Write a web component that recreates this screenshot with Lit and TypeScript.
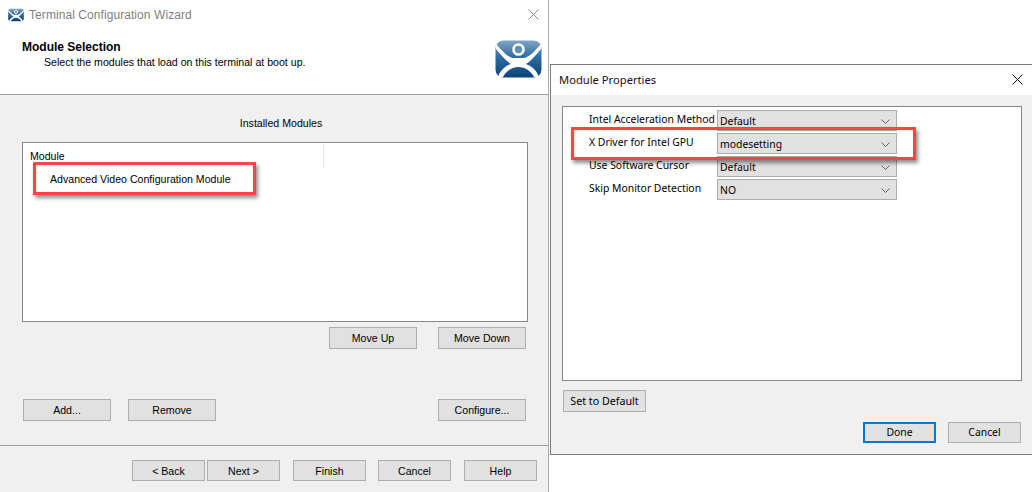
import { LitElement, html, css } from "lit";
import { customElement } from "lit/decorators.js";

const logo = (w: number, h: number) => html`<svg width=${w} height=${h} viewBox="0 0 47 38">
  <defs><linearGradient id="lg${w}" x1="0" y1="0" x2="0" y2="1">
    <stop offset="0" stop-color="#7fa6c8"/><stop offset=".45" stop-color="#2f6b9f"/><stop offset="1" stop-color="#0b4479"/>
  </linearGradient></defs>
  <rect x="0.5" y="0.5" width="46" height="37" rx="8" fill="url(#lg${w})"/>
  <circle cx="23.5" cy="9.5" r="5" fill="#5f8db5" stroke="#fff" stroke-width="2.6"/>
  <path d="M1 4 C8 12 13 17 18 18 L29 18 C34 17 39 12 46 4 L46 9 C40 16 36 21 31 24 C37 26 42 31 44 37 L39 37 C36 31 30 27 23.5 27 C17 27 11 31 8 37 L3 37 C5 31 10 26 16 24 C11 21 7 16 1 9 Z" fill="#fff"/>
</svg>`;

@customElement("app-root")
export class AppRoot extends LitElement {
  static styles = css`
    :host { display: flex; width: 1032px; height: 492px; background: #fff; overflow: hidden; position: relative;
      font: 10.6px "Liberation Sans", Arial, sans-serif; color: #000; }
    * { box-sizing: border-box; }
    .wiz { width: 549px; height: 492px; border-right: 1px solid #a9a9a9; background: #f0f0f0; display: flex; flex-direction: column; flex: none; }
    .wiz-head { height: 95px; background: #fff; border-bottom: 1px solid #a0a0a0; position: relative; flex: none; }
    .title { display: flex; align-items: center; height: 30px; padding-left: 8px; gap: 5px; color: #7f7f7f; font-size: 12px; letter-spacing: .07px; }
    .title svg { flex: none; }
    .x { position: absolute; }
    .hwrap { display: flex; justify-content: space-between; padding: 10px 6px 0 22px; }
    .h1 { font-weight: 700; line-height: 15px; font-size: 12px; }
    .h2 { padding-left: 22px; line-height: 15px; }
    .wiz-body { flex: 1; display: flex; flex-direction: column; padding: 0 20px 0 22px; }
    .cap { text-align: center; margin-top: 21px; height: 15px; line-height: 15px; padding-left: 12px; margin-bottom: 11px; }
    .list { height: 180px; background: #fff; border: 1px solid #828790; position: relative; flex: none; }
    .list .col { position: absolute; left: 300px; top: 1px; width: 1px; height: 24px; background: #e5e5e5; }
    .list .mh { padding: 6px 0 0 7px; line-height: 14px; }
    .list .it { padding: 9px 0 0 27px; line-height: 14px; }
    .btn { display: flex; align-items: center; justify-content: center; background: #e1e1e1; border: 1px solid #adadad; height: 22px; width: 88px; flex: none; }
    .b73 { width: 73px; height: 21px; }
    .row { display: flex; }
    .r1 { justify-content: flex-end; gap: 21px; margin-top: 5px; padding-right: 2px; }
    .r2 { gap: 17px; margin-top: 50px; padding-left: 1px; }
    .r2 .end { margin-left: auto; margin-right: 2px; }
    .wiz-foot { height: 47px; border-top: 1px solid #a0a0a0; flex: none; display: flex; padding: 14px 0 0 132px; }
    .wiz-foot .btn + .btn { margin-left: 13px; }
    .wiz-foot .btn.next { margin-left: 2px; }
    .wiz-foot .btn.c { margin-left: 12px; }
    .right { flex: 1; padding: 64px 0 0 1px; }
    .dlg { height: 391px; border: 1px solid #7a7a7a; border-right: none; background: #f0f0f0; display: flex; flex-direction: column; position: relative;
      font-family: "Noto Sans", sans-serif; font-size: 10.4px; }
    .dlg .btn { padding-bottom: 2px; }
    .dlg .btn.set { padding-bottom: 0; font-size: 10.7px; }
    .dlg-title { height: 30px; background: #fff; display: flex; align-items: center; padding: 0 0 2px 8px; font-size: 11.2px; flex: none; color: #1a0a2a; }
    .panel { margin: 11px 10px 0 11px; height: 275px; background: #fff; border: 1px solid #828790; padding: 3px 0 0 26px; display: grid; grid-template-columns: 128px 180px; grid-auto-rows: 21px; row-gap: 2px; align-content: start; }
    .lab { line-height: 19px; white-space: nowrap; }
    .combo { background: #e1e1e1; border: 1px solid #adadad; display: flex; align-items: center; justify-content: space-between; padding: 1px 6px 0 2px; }
    .set { width: 83px; height: 22px; margin: 9px 0 0 12px; }
    .acts { display: flex; justify-content: flex-end; gap: 12px; margin: 10px 11px 0 0; }
    .done { border: 2px solid #0078d7; }
    .red { position: absolute; border: 3px solid #fb4349; box-shadow: 2px 3px 4px rgba(0,0,0,.45), inset 1px 1px 3px rgba(0,0,0,.12); pointer-events: none; }
    .r-a { left: 33px; top: 162px; width: 223px; height: 33px; }
    .r-b { left: 571px; top: 127px; width: 345px; height: 33px; }
  `;

  private cross(color: string) {
    return html`<svg width="11" height="11" viewBox="0 0 11 11"><path d="M.5.5l10 10M10.5.5l-10 10" stroke=${color} fill="none"/></svg>`;
  }
  private chev() {
    return html`<svg width="9" height="5" viewBox="0 0 9 5"><path d="M.5.5l4 4 4-4" stroke="#5f5f5f" fill="none"/></svg>`;
  }

  render() {
    const rows = [["Intel Acceleration Method","Default"],["X Driver for Intel GPU","modesetting"],["Use Software Cursor","Default"],["Skip Monitor Detection","NO"]];
    return html`
      <section class="wiz">
        <header class="wiz-head">
          <div class="title">${logo(16,14)}<span>Terminal Configuration Wizard</span></div>
          <div class="x" style="left:528px;top:9px">${this.cross("#8a8a8a")}</div>
          <div class="hwrap">
            <div><div class="h1">Module Selection</div><div class="h2">Select the modules that load on this terminal at boot up.</div></div>
            <div>${logo(47,38)}</div>
          </div>
        </header>
        <div class="wiz-body">
          <div class="cap">Installed Modules</div>
          <div class="list"><span class="col"></span><div class="mh">Module</div><div class="it">Advanced Video Configuration Module</div></div>
          <div class="row r1"><div class="btn">Move Up</div><div class="btn">Move Down</div></div>
          <div class="row r2"><div class="btn">Add...</div><div class="btn">Remove</div><div class="btn end">Configure...</div></div>
        </div>
        <footer class="wiz-foot">
          <div class="btn b73">&lt; Back</div><div class="btn b73 next">Next &gt;</div><div class="btn b73">Finish</div><div class="btn b73 c">Cancel</div><div class="btn b73">Help</div>
        </footer>
      </section>
      <div class="right">
        <section class="dlg">
          <div class="dlg-title">Module Properties</div>
          <div class="x" style="left:461px;top:9px">${this.cross("#111")}</div>
          <div class="panel">
            ${rows.map(([l,v]) => html`<div class="lab">${l}</div><div class="combo"><span>${v}</span>${this.chev()}</div>`)}
          </div>
          <div class="btn set">Set to Default</div>
          <div class="acts"><div class="btn b73 done">Done</div><div class="btn b73">Cancel</div></div>
        </section>
      </div>
      <div class="red r-a"></div>
      <div class="red r-b"></div>
    `;
  }
}
